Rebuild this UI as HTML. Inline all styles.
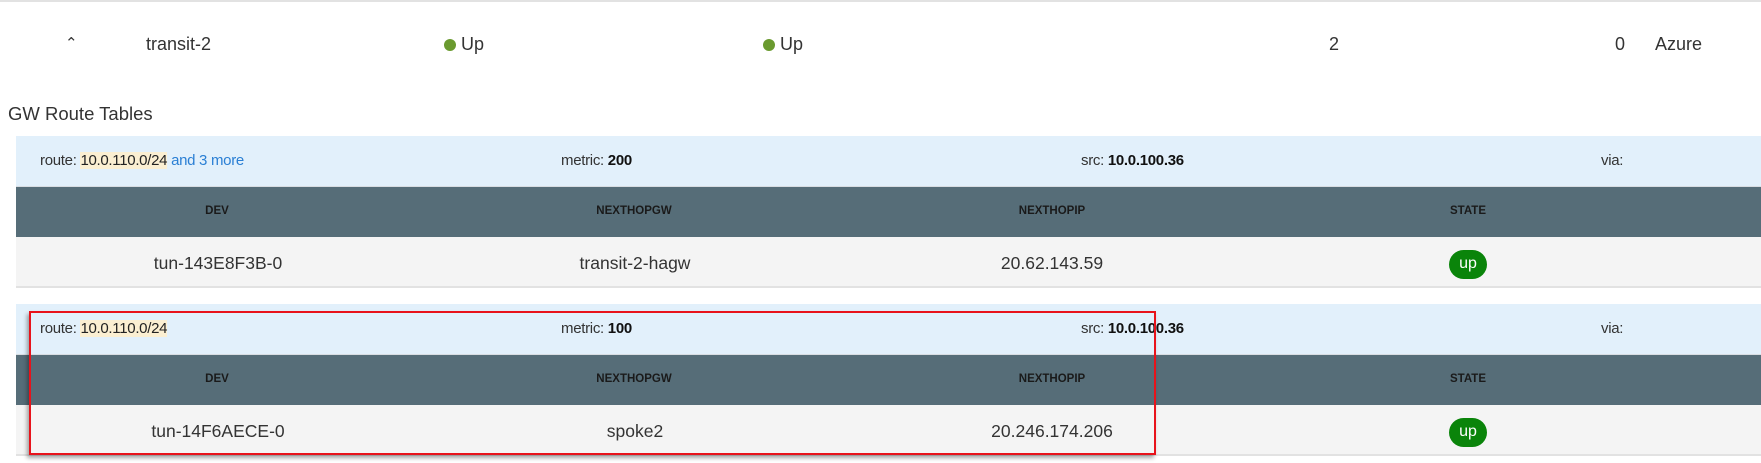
<!DOCTYPE html>
<html><head><meta charset="utf-8"><style>
*{margin:0;padding:0;box-sizing:border-box}
body{width:1761px;height:463px;background:#fff;position:relative;overflow:hidden;font-family:"Liberation Sans",sans-serif;color:#333}
.a{position:absolute;white-space:nowrap}
.top{position:absolute;left:0;top:0;width:1761px;height:2px;background:#e2e2e2}
.row{font-size:18px;color:#333;top:34px}
.dot{position:absolute;width:12px;height:12px;border-radius:50%;background:#6a9a2f;top:39px}
.bar{position:absolute;left:16px;width:1745px;height:51px;background:#e2f0fb;border-bottom:1px solid #d8dde2}
.hdr{position:absolute;left:16px;width:1745px;height:50px;background:#566d78}
.tr{position:absolute;left:16px;width:1745px;height:51px;background:#f4f4f4;border-bottom:2px solid #e2e2e2}
.rt{font-size:15px;color:#333;letter-spacing:-0.3px}
.rt b{color:#111}
.hl{background:#fbefd2;color:#222}
.lk{color:#2a7fd4}
.h{font-size:11.5px;font-weight:bold;color:#1a1a1a;transform:translateX(-50%)}
.c{font-size:17.5px;color:#333;transform:translateX(-50%)}
.badge{position:absolute;width:38px;height:29px;border-radius:15px;background:#0a840a;color:#fff;font-size:16px;text-align:center;line-height:27px;left:1449px}
</style></head><body>
<div class="top"></div>
<div class="a row" style="left:65px;top:34px;font-size:15px">&#8963;</div>
<div class="a row" style="left:146px">transit-2</div>
<div class="dot" style="left:444px"></div>
<div class="a row" style="left:461px">Up</div>
<div class="dot" style="left:763px"></div>
<div class="a row" style="left:780px">Up</div>
<div class="a row" style="left:1329px">2</div>
<div class="a row" style="left:1615px">0</div>
<div class="a row" style="left:1655px">Azure</div>
<div class="a" style="left:8px;top:103px;font-size:18.5px;color:#333">GW Route Tables</div>

<div class="bar" style="top:136px"></div>
<div class="a rt" style="left:40px;top:152px">route: <span class="hl">10.0.110.0/24</span> <span class="lk">and 3 more</span></div>
<div class="a rt" style="left:561px;top:152px">metric: <b>200</b></div>
<div class="a rt" style="left:1081px;top:152px">src: <b>10.0.100.36</b></div>
<div class="a rt" style="left:1601px;top:152px">via:</div>
<div class="hdr" style="top:187px"></div>
<div class="a h" style="left:217px;top:205px">DEV</div>
<div class="a h" style="left:634px;top:205px">NEXTHOPGW</div>
<div class="a h" style="left:1052px;top:205px">NEXTHOPIP</div>
<div class="a h" style="left:1468px;top:205px">STATE</div>
<div class="tr" style="top:237px"></div>
<div class="a c" style="left:218px;top:253px">tun-143E8F3B-0</div>
<div class="a c" style="left:635px;top:253px">transit-2-hagw</div>
<div class="a c" style="left:1052px;top:253px">20.62.143.59</div>
<div class="badge" style="top:250px">up</div>

<div class="bar" style="top:304px"></div>
<div class="a rt" style="left:40px;top:320px">route: <span class="hl">10.0.110.0/24</span></div>
<div class="a rt" style="left:561px;top:320px">metric: <b>100</b></div>
<div class="a rt" style="left:1081px;top:320px">src: <b>10.0.100.36</b></div>
<div class="a rt" style="left:1601px;top:320px">via:</div>
<div class="hdr" style="top:355px"></div>
<div class="a h" style="left:217px;top:373px">DEV</div>
<div class="a h" style="left:634px;top:373px">NEXTHOPGW</div>
<div class="a h" style="left:1052px;top:373px">NEXTHOPIP</div>
<div class="a h" style="left:1468px;top:373px">STATE</div>
<div class="tr" style="top:405px"></div>
<div class="a c" style="left:218px;top:421px">tun-14F6AECE-0</div>
<div class="a c" style="left:635px;top:421px">spoke2</div>
<div class="a c" style="left:1052px;top:421px">20.246.174.206</div>
<div class="badge" style="top:418px">up</div>

<div style="position:absolute;left:29px;top:311px;width:1127px;height:144px;border:2px solid #e8131b;box-shadow:-2px 3px 4px rgba(0,0,0,0.35)"></div>
</body></html>
